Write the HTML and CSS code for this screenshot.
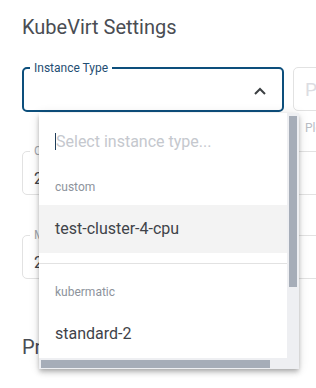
FILE: index.html
```html
<!DOCTYPE html>
<html lang="en">
<head>
  <meta charset="UTF-8">
  <meta name="viewport" content="width=device-width, initial-scale=1.0">
  <title>KubeVirt Settings</title>
  <link rel="stylesheet" href="styles.css">
</head>
<body>

  <div class="page">
    <!-- Section title -->
    <h2 class="section-title">KubeVirt Settings</h2>

    <!-- Form fields -->
    <div class="form-grid">
      <div class="form-field">
        <div class="outline focused">
          <span class="float-label">Instance Type</span>
          <span class="value"></span>
          <svg class="chevron" width="12" height="8" viewBox="0 0 12 8">
            <path d="M1 7 L6 2 L11 7" fill="none" stroke="#3c4043" stroke-width="2"/>
          </svg>
        </div>
        <div class="subscript"></div>
      </div>

      <div class="form-field">
        <div class="outline">
          <span class="placeholder">Preference</span>
        </div>
        <div class="subscript">Please select instance type first</div>
      </div>

      <div class="form-field">
        <div class="outline">
          <span class="float-label">CPUs</span>
          <span class="value">2</span>
        </div>
        <div class="subscript"></div>
      </div>

      <div class="form-field">
        <div class="outline"></div>
        <div class="subscript"></div>
      </div>

      <div class="form-field">
        <div class="outline">
          <span class="float-label">Memory (MB)</span>
          <span class="value">2048</span>
        </div>
        <div class="subscript"></div>
      </div>

      <div class="form-field">
        <div class="outline"></div>
        <div class="subscript"></div>
      </div>
    </div>

    <h2 class="section-title next">Provider Settings</h2>
  </div>

  <!-- Open select panel -->
  <div class="select-panel">
    <div class="panel-content">
      <div class="search-row">
        <span class="caret"></span>
        <span class="search-placeholder">Select instance type...</span>
      </div>

      <div class="group-label">custom</div>
      <div class="option active">test-cluster-4-cpu</div>

      <div class="divider"></div>

      <div class="group-label">kubermatic</div>
      <div class="option">standard-2</div>
    </div>

    <!-- Scrollbars -->
    <div class="v-track"><div class="v-thumb"></div></div>
    <div class="h-track"><div class="h-thumb"></div></div>
    <div class="corner"></div>
  </div>

</body>
</html>
```

FILE: styles.css
```css
/* Basic reset */
* {
  margin: 0;
  padding: 0;
  box-sizing: border-box;
  font-family: Roboto, "Liberation Sans", Arial, sans-serif;
}

body {
  width: 316px;
  height: 388px;
  overflow: hidden;
  background-color: #ffffff;
}

.page {
  padding: 13px 0 0 22px;
}

.section-title {
  font-size: 20px;
  line-height: 28px;
  font-weight: 400;
  color: #4a4d53;
  margin-bottom: 26px;
  white-space: nowrap;
}

.section-title.next {
  margin-top: 14px;
}

.form-grid {
  display: grid;
  grid-template-columns: 262px 262px;
  column-gap: 9px;
}

.outline {
  position: relative;
  display: flex;
  align-items: center;
  height: 44px;
  padding: 0 12px 0 11px;
  border: 1px solid #e2e2e2;
  border-radius: 5px;
}

.outline.focused {
  border: 2px solid #0d4f7c;
  padding: 0 16px 0 10px;
  height: 45px;
  margin-bottom: -1px;
}

/* Label sitting on the top border */
.float-label {
  position: absolute;
  top: -8px;
  left: 7px;
  padding: 0 4px;
  background-color: #ffffff;
  font-size: 12px;
  line-height: 14px;
  color: #a3a7ad;
  white-space: nowrap;
}

.focused .float-label {
  left: 6px;
  color: #1f4e73;
}

.value {
  flex: 1;
  padding-top: 12px;
  font-size: 16px;
  line-height: 20px;
  color: #3f4349;
}

.focused .value {
  padding-top: 0;
}

.chevron {
  margin-top: 2px;
}

.placeholder {
  font-size: 19px;
  color: #dcdde2;
}

.subscript {
  height: 40px;
  padding: 10px 0 0 12px;
  font-size: 12px;
  line-height: 14px;
  color: #b9bdc4;
  white-space: nowrap;
}

/* Select dropdown panel, lies over the form */
.select-panel {
  position: absolute;
  left: 39px;
  top: 113px;
  display: grid;
  grid-template-columns: 248px 12px;
  grid-template-rows: 245px 11px;
  background-color: #ffffff;
  box-shadow: 0 2px 4px -1px rgba(0, 0, 0, 0.2),
              0 4px 5px 0 rgba(0, 0, 0, 0.14),
              0 1px 10px 0 rgba(0, 0, 0, 0.12);
}

.panel-content {
  overflow: hidden;
}

.search-row {
  display: flex;
  align-items: center;
  height: 56px;
  padding-left: 16px;
}

.caret {
  width: 1px;
  height: 17px;
  background-color: #1f3d5a;
}

.search-placeholder {
  font-size: 16px;
  color: #c5c8ce;
  white-space: nowrap;
}

.group-label {
  height: 36px;
  line-height: 36px;
  padding-left: 16px;
  font-size: 12px;
  color: #8d939c;
}

.option {
  height: 48px;
  line-height: 48px;
  padding-left: 16px;
  font-size: 16px;
  color: #3f4349;
  white-space: nowrap;
}

.option.active {
  background-color: #f3f3f3;
}

.divider {
  margin: 10px 0;
  border-top: 1px solid #e2e2e2;
}

.v-track,
.h-track,
.corner {
  background-color: #eeeff2;
}

.v-thumb {
  width: 8px;
  height: 171px;
  margin: 3px 0 0 2px;
  background-color: #a6adb8;
}

.h-thumb {
  width: 229px;
  height: 8px;
  margin: 2px 0 0 2px;
  background-color: #a6adb8;
}
```
